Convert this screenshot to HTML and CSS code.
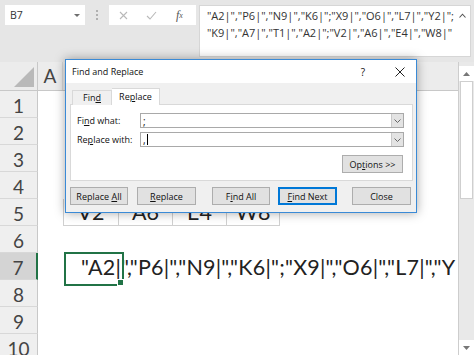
FILE: index.html
```html
<!DOCTYPE html>
<html lang="en">

<head>
    <meta charset="UTF-8">
    <title>Find and Replace</title>
    <link rel="stylesheet" href="styles.css">
</head>

<body>
    <div class="app">
        <!-- formula bar -->
        <div class="formula-bar">
            <div class="name-box"><span>B7</span><span class="nb-arrow"></span></div>
            <div class="grip"><span></span><span></span><span></span></div>
            <div class="fx-buttons">
                <span class="fx-btn">
                    <svg width="9" height="9" viewBox="0 0 9 9"><path d="M1 1L8 8M8 1L1 8" stroke="#b9b9b9" stroke-width="1.1" fill="none"/></svg>
                </span>
                <span class="fx-btn">
                    <svg width="11" height="9" viewBox="0 0 11 9"><path d="M1 5L4 8L10 1" stroke="#b9b9b9" stroke-width="1.1" fill="none"/></svg>
                </span>
                <span class="fx-btn fx-fn"><i>f</i><sub>x</sub></span>
            </div>
            <div class="formula-text">
                <div class="ft-lines">
                    <div>"A2|","P6|","N9|","K6|";"X9|","O6|","L7|","Y2|";</div>
                    <div>"K9|","A7|","T1|","A2|";"V2|","A6|","E4|","W8|"</div>
                </div>
                <span class="ft-arrow">
                    <svg width="7" height="5" viewBox="0 0 7 5"><path d="M0.5 4.5L3.5 1.2L6.5 4.5" stroke="#555" stroke-width="1.1" fill="none"/></svg>
                </span>
            </div>
        </div>

        <!-- sheet -->
        <div class="sheet">
            <div class="grid">
                <div class="row head">
                    <div class="rh corner"><span class="tri"></span></div>
                    <div class="ch col-a">A</div>
                </div>
                <div class="row"><div class="rh">1</div></div>
                <div class="row"><div class="rh">2</div></div>
                <div class="row"><div class="rh">3</div></div>
                <div class="row"><div class="rh">4</div></div>
                <div class="row">
                    <div class="rh">5</div>
                    <div class="cell col-a"></div>
                    <div class="cell boxed first col-b">V2</div>
                    <div class="cell boxed col-c">A6</div>
                    <div class="cell boxed col-d">E4</div>
                    <div class="cell boxed col-e">W8</div>
                </div>
                <div class="row"><div class="rh">6</div></div>
                <div class="row sel">
                    <div class="rh">7</div>
                    <div class="cell col-a"></div>
                    <div class="cell active col-b"><span class="overflow">"A2|","P6|","N9|","K6|";"X9|","O6|","L7|","Y</span></div>
                </div>
                <div class="row"><div class="rh">8</div></div>
                <div class="row"><div class="rh">9</div></div>
                <div class="row"><div class="rh">10</div></div>
            </div>
            <div class="vscroll">
                <span class="sb-btn">
                    <svg width="7" height="4" viewBox="0 0 7 4"><path d="M0 4L3.5 0L7 4Z" fill="#777"/></svg>
                </span>
                <span class="sb-thumb"></span>
                <span class="sb-track"></span>
                <span class="sb-btn">
                    <svg width="7" height="4" viewBox="0 0 7 4"><path d="M0 0L3.5 4L7 0Z" fill="#777"/></svg>
                </span>
            </div>
        </div>

        <!-- dialog -->
        <div class="dialog">
            <div class="dlg-title">
                <span class="dlg-name">Find and Replace</span>
                <span class="dlg-help">?</span>
                <span class="dlg-close">
                    <svg width="10" height="10" viewBox="0 0 10 10"><path d="M0.5 0.5L9.5 9.5M9.5 0.5L0.5 9.5" stroke="#222" stroke-width="1" fill="none"/></svg>
                </span>
            </div>
            <div class="dlg-body">
                <div class="tabs">
                    <span class="tab">Fin<u>d</u></span>
                    <span class="tab on">Re<u>p</u>lace</span>
                </div>
                <div class="panel">
                    <div class="field">
                        <label>Fi<u>n</u>d what:</label>
                        <div class="combo"><span class="val">;</span><span class="drop"><svg width="7" height="4" viewBox="0 0 7 4"><path d="M0.5 0.5L3.5 3.5L6.5 0.5" stroke="#666" stroke-width="1" fill="none"/></svg></span></div>
                    </div>
                    <div class="field">
                        <label>Re<u>p</u>lace with:</label>
                        <div class="combo"><span class="val">,<span class="caret"></span></span><span class="drop"><svg width="7" height="4" viewBox="0 0 7 4"><path d="M0.5 0.5L3.5 3.5L6.5 0.5" stroke="#666" stroke-width="1" fill="none"/></svg></span></div>
                    </div>
                    <div class="opt-row">
                        <button class="btn opt">Op<u>t</u>ions &gt;&gt;</button>
                    </div>
                </div>
                <div class="actions">
                    <button class="btn b-all">Replace <u>A</u>ll</button>
                    <button class="btn b-rep"><u>R</u>eplace</button>
                    <button class="btn b-fall">F<u>i</u>nd All</button>
                    <button class="btn b-next"><u>F</u>ind Next</button>
                    <button class="btn b-close">Close</button>
                </div>
            </div>
        </div>
    </div>
</body>

</html>
```

FILE: styles.css
```css
* {
    box-sizing: border-box;
}

body {
    margin: 0;
    width: 474px;
    height: 355px;
    overflow: hidden;
    background: #e6e6e6;
    font-family: "Open Sans", "Liberation Sans", sans-serif;
}

.app {
    position: relative;
    height: 355px;
    overflow: hidden;
}

/* formula bar */
.formula-bar {
    display: flex;
    align-items: flex-start;
    height: 62px;
    padding: 5px 3px 0 5px;
}

.name-box {
    width: 80px;
    height: 20px;
    background: #fff;
    display: flex;
    align-items: center;
    justify-content: space-between;
    padding: 0 5px 0 5px;
    font-size: 10.5px;
    color: #333;
}

.nb-arrow {
    border: 3px solid transparent;
    border-top: 3px solid #6e6e6e;
    margin-top: 3px;
}

.grip {
    width: 25px;
    height: 20px;
    display: flex;
    flex-direction: column;
    align-items: center;
    justify-content: center;
    gap: 2px;
}

.grip span {
    width: 2px;
    height: 2px;
    background: #b0b0b0;
}

.fx-buttons {
    width: 87px;
    height: 20px;
    background: #fff;
    display: flex;
    align-items: center;
}

.fx-btn {
    width: 28px;
    height: 20px;
    display: flex;
    align-items: center;
    justify-content: center;
}

.fx-fn {
    font-family: "Liberation Serif", serif;
    font-size: 12px;
    color: #555;
}

.fx-fn sub {
    font-size: 8px;
    font-style: italic;
    vertical-align: -1px;
}

.formula-text {
    flex: 1;
    height: 52px;
    margin-left: 3px;
    background: #fff;
    border: 1px solid #d6d6d6;
    display: flex;
    padding: 1px 0 0 7px;
    font-size: 11px;
    line-height: 17px;
    color: #333;
}

.ft-lines {
    flex: 1;
    white-space: nowrap;
}

.ft-arrow {
    width: 16px;
    display: flex;
    justify-content: center;
    padding-top: 6px;
}

/* sheet */
.sheet {
    display: flex;
    height: 293px;
}

.grid {
    flex: 1;
    overflow: hidden;
    background: #fff;
    font-family: Lato, "Open Sans", sans-serif;
}

.row {
    display: flex;
    height: 27px;
}

.row.head {
    height: 29px;
    background: #ececec;
    border-bottom: 1px solid #c8c8c8;
}

.rh {
    width: 38px;
    flex: none;
    background: #efefef;
    border-right: 1px solid #c8c8c8;
    border-bottom: 1px solid #d8d8d8;
    display: flex;
    align-items: center;
    justify-content: center;
    padding-top: 2px;
    font-size: 19px;
    color: #444;
}

.row.sel .rh {
    background: #d4d4d4;
    border-right: 2px solid #217346;
}

.corner {
    background: #ececec;
    border-bottom: none;
    position: relative;
}

.tri {
    position: absolute;
    right: 3px;
    bottom: 3px;
    width: 0;
    height: 0;
    border-left: 20px solid transparent;
    border-bottom: 20px solid #b9b9b9;
}

.ch {
    display: flex;
    justify-content: center;
    align-items: flex-end;
    padding-bottom: 3px;
    font-size: 19px;
    color: #444;
    border-right: 1px solid #d8d8d8;
}

.col-a {
    width: 25px;
}

.col-b {
    width: 56px;
}

.col-c,
.col-d {
    width: 54px;
}

.col-e {
    width: 53px;
}

.cell {
    flex: none;
    font-size: 21.5px;
    line-height: 27px;
    color: #222;
}

.cell.boxed {
    text-align: center;
    border-right: 1px solid #d0d0d0;
    border-bottom: 1px solid #d0d0d0;
    line-height: 26px;
}

.cell.boxed.first {
    border-left: 1px solid #d0d0d0;
}

.cell.active {
    position: relative;
    padding: 1px 0 0 18px;
    white-space: nowrap;
    letter-spacing: 0.2px;
}

.cell.active::after {
    content: "";
    position: absolute;
    left: 1px;
    top: -1px;
    width: 56px;
    height: 30px;
    border: 2px solid #217346;
}

.cell.active::before {
    content: "";
    position: absolute;
    left: 54px;
    top: 26px;
    width: 5px;
    height: 5px;
    background: #217346;
    border: 1px solid #fff;
    z-index: 1;
}

/* scrollbar */
.vscroll {
    width: 16px;
    flex: none;
    background: #e9e9e9;
    border-left: 1px solid #cdcdcd;
    display: flex;
    flex-direction: column;
    padding-top: 4px;
}

.sb-btn {
    height: 15px;
    display: flex;
    align-items: center;
    justify-content: center;
    background: #fff;
}

.sb-thumb {
    height: 118px;
    margin: 0 1px;
    background: #fff;
    border: 1px solid #cfcfcf;
}

.sb-track {
    flex: 1;
}

/* dialog */
.dialog {
    position: absolute;
    left: 65px;
    top: 59px;
    width: 352px;
    height: 154px;
    background: #f0f0f0;
    border: 1px solid #3a8ad6;
    box-shadow: 0 0 10px rgba(0, 0, 0, 0.35);
    font-size: 9px;
    color: #111;
    display: flex;
    flex-direction: column;
    z-index: 5;
}

.dlg-title {
    height: 23px;
    background: #fff;
    display: flex;
    align-items: center;
    padding-left: 6px;
    font-size: 9px;
}

.dlg-name {
    flex: 1;
}

.dlg-help {
    width: 40px;
    text-align: center;
    font-size: 10px;
}

.dlg-close {
    width: 33px;
    display: flex;
    justify-content: center;
}

.dlg-body {
    flex: 1;
    padding: 5px 0 0 4px;
}

.tabs {
    display: flex;
    align-items: flex-end;
    height: 17px;
    padding-left: 2px;
    position: relative;
    z-index: 1;
}

.tab {
    width: 40px;
    height: 15px;
    text-align: center;
    line-height: 14px;
    border: 1px solid #d9d9d9;
    border-bottom: none;
    background: #f0f0f0;
}

.tab.on {
    width: 48px;
    height: 17px;
    line-height: 16px;
    background: #fff;
    border-left: none;
}

.panel {
    width: 343px;
    height: 77px;
    margin-top: -1px;
    background: #fff;
    border: 1px solid #d9d9d9;
    padding: 8px 8px 0 6px;
}

.field {
    display: flex;
    align-items: center;
    height: 15px;
    margin-bottom: 4px;
}

.field label {
    width: 63px;
}

.combo {
    flex: 1;
    height: 15px;
    border: 1px solid #a9a9a9;
    display: flex;
    align-items: center;
}

.val {
    flex: 1;
    padding-left: 2px;
    display: flex;
    align-items: center;
    font-size: 10px;
}

.caret {
    width: 1px;
    height: 11px;
    background: #000;
    margin-left: 1px;
}

.drop {
    width: 12px;
    height: 13px;
    background: #e3e3e3;
    border-left: 1px solid #c9c9c9;
    display: flex;
    align-items: center;
    justify-content: center;
}

.opt-row {
    display: flex;
    justify-content: flex-end;
    padding-top: 4px;
    padding-right: 1px;
}

.btn {
    height: 18px;
    width: 59px;
    padding: 0;
    font-family: inherit;
    font-size: 9px;
    color: #111;
    background: #e1e1e1;
    border: 1px solid #adadad;
}

.btn.opt {
    width: 61px;
}

.actions {
    display: flex;
    margin-top: 6px;
}

.b-all {
    width: 58px;
}

.b-rep {
    margin-left: 9px;
}

.b-fall {
    width: 58px;
    margin-left: 16px;
}

.b-next {
    margin-left: 8px;
    border-color: #0078d7;
    box-shadow: inset 0 0 0 1px #0078d7;
}

.b-close {
    margin-left: 15px;
}
```
